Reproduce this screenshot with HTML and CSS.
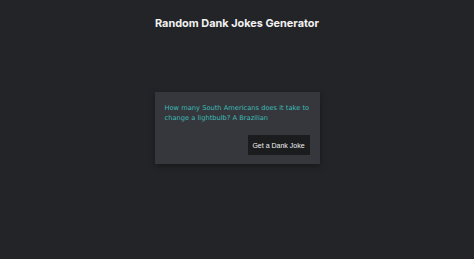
FILE: index.html
```html
<!DOCTYPE html>
<html>
<head>
<meta charset="utf-8">
<link rel="stylesheet" href="styles.css">
</head>
<body>
<main class="page">
  <h1 class="title">Random Dank Jokes Generator</h1>
  <section class="card">
    <p class="joke">How many South Americans does it take to change a lightbulb? A Brazilian</p>
    <div class="actions">
      <button class="btn">Get a Dank Joke</button>
    </div>
  </section>
</main>
</body>
</html>
```
FILE: styles.css
```css
html, body {
  margin: 0;
  padding: 0;
  background: #232427;
  height: 100%;
}
.page {
  display: flex;
  flex-direction: column;
  align-items: center;
  font-family: "Inter", "Open Sans", sans-serif;
}
.title {
  margin: 16px 0 0;
  color: #f2f2f2;
  font-size: 10.9px;
  font-weight: 700;
  line-height: 14px;
}
.card {
  margin-top: 62px;
  width: 165px;
  box-sizing: border-box;
  padding: 11px 6px 9px 10px;
  background: #35373d;
  box-shadow: 0 2px 6px rgba(0,0,0,0.35);
}
.joke {
  margin: 0;
  color: #3cbcb6;
  font-family: "DejaVu Sans", sans-serif;
  font-size: 6.7px;
  font-weight: 400;
  line-height: 10px;
}
.actions {
  display: flex;
  justify-content: flex-end;
  margin-top: 12px;
  padding-right: 4px;
}
.btn {
  border: none;
  background: #1b1c1e;
  color: #f0f0f0;
  font-family: "Liberation Sans", Arial, sans-serif;
  font-size: 7px;
  width: 62px;
  height: 20px;
  padding: 0;
  cursor: pointer;
}
```
